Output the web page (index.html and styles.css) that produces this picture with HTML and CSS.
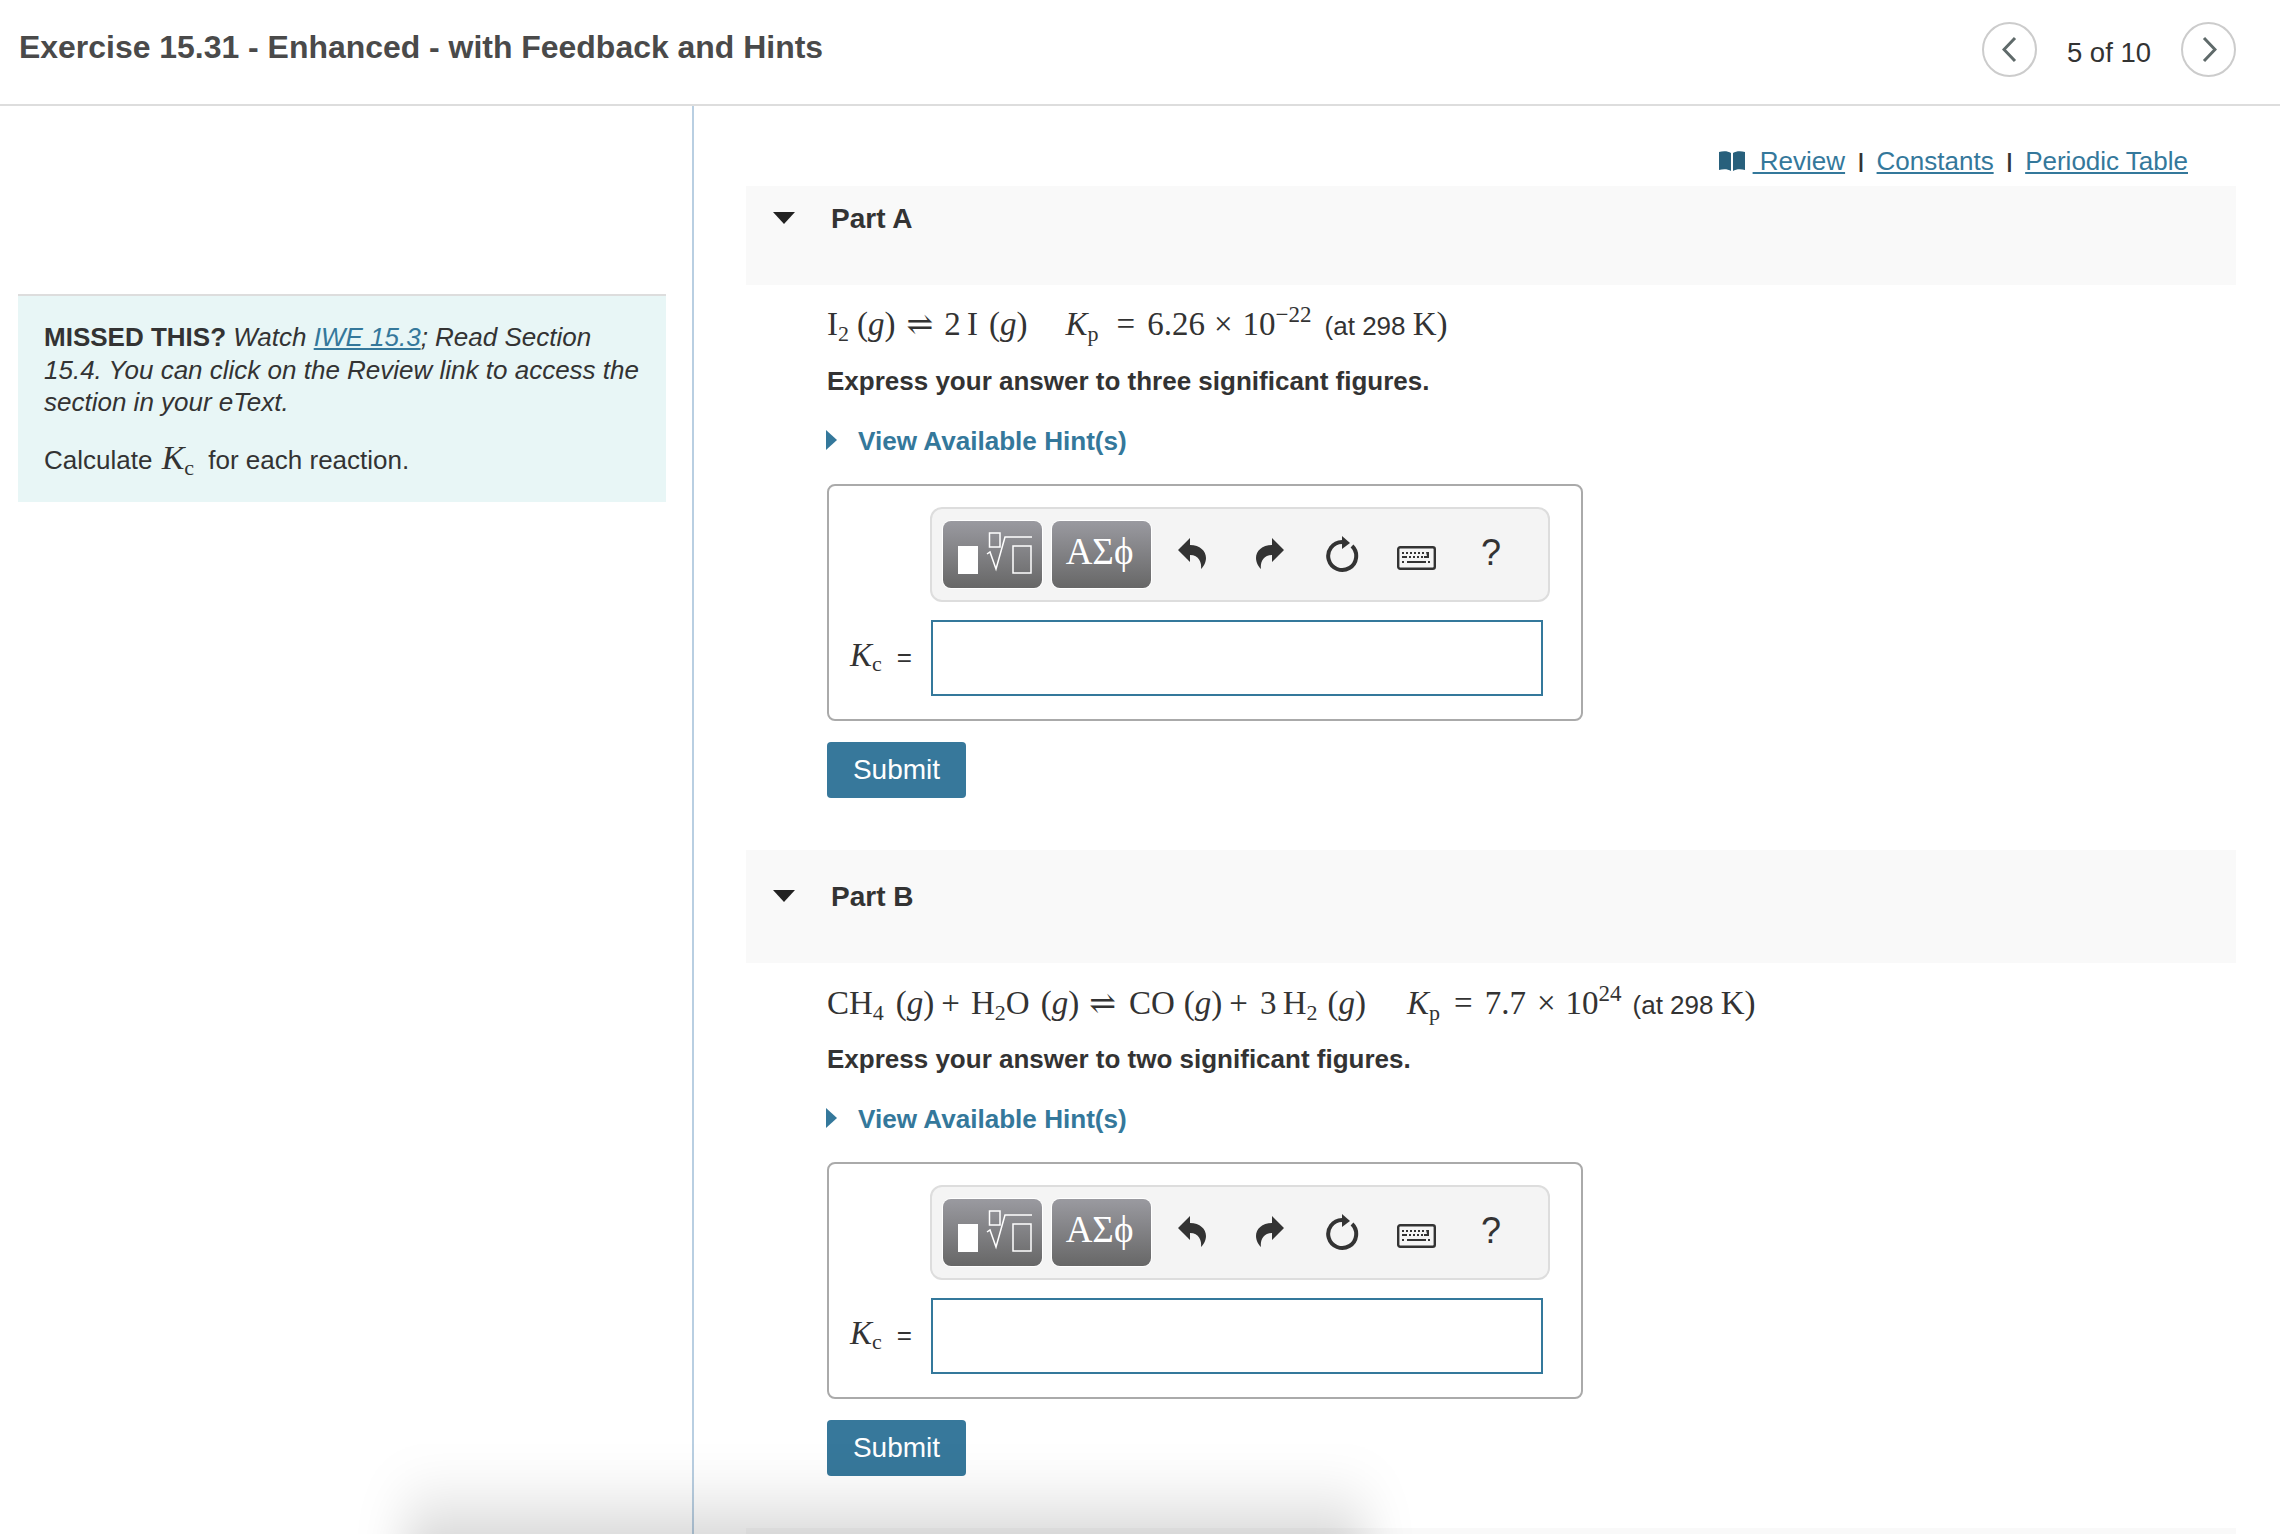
FILE: index.html
```html
<!DOCTYPE html>
<html lang="en">
<head>
<meta charset="utf-8">
<title>Exercise 15.31</title>
<link rel="stylesheet" href="styles.css">
</head>
<body>
<header class="topbar">
  <h1 class="title">Exercise 15.31 - Enhanced - with Feedback and Hints</h1>
  <nav class="pager">
    <button class="circle"><svg width="16" height="27" viewBox="0 0 16 27"><path d="M13 2 2 13.5 13 25" fill="none" stroke="#5f6a6a" stroke-width="3"/></svg></button>
    <span class="count">5 of 10</span>
    <button class="circle"><svg width="16" height="27" viewBox="0 0 16 27"><path d="M3 2l11 11.500L3 25" fill="none" stroke="#5f6a6a" stroke-width="3"/></svg></button>
  </nav>
</header>
<div class="main">
  <aside class="side">
    <div class="note">
      <p class="note-line"><b>MISSED THIS?</b> Watch <a href="#">IWE 15.3</a>; Read Section</p>
      <p class="note-line">15.4. You can click on the Review link to access the</p>
      <p class="note-line">section in your eText.</p>
      <p class="calc">Calculate <i class="k-big">K</i><span class="sub-c">c</span> for each reaction.</p>
    </div>
  </aside>
  <section class="content">
    <div class="links">
      <svg class="book" width="26" height="20" viewBox="0 0 26 20"><path d="M0 1c4-1 9-1 12 1v18c-3-2-8-2-12-1zM26 1c-4-1-9-1-12 1v18c3-2 8-2 12-1z" fill="#28607c"/></svg>
      <a href="#">&nbsp;Review</a><span class="sep">|</span><a href="#">Constants</a><span class="sep">|</span><a href="#">Periodic Table</a>
    </div>

    <div class="part-head"><span class="tri-down"></span><span class="part-name">Part A</span></div>
    <div class="part-body">
      <div class="eq">
        <span>I<sub>2</sub></span><span class="m8">(<i>g</i>)</span><span class="arrow m11">⇌</span><span class="m11 tight">2 I</span><span class="m11">(<i>g</i>)</span><span class="m38"><i>K</i><sub>p</sub></span><span class="m18">=</span><span class="m12">6.26</span><span class="m9">×</span><span class="m10">10<sup>−22</sup></span><span class="at m13">(at 298 </span><span>K)</span>
      </div>
      <p class="express">Express your answer to three significant figures.</p>
      <div class="hint"><span class="tri-right"></span><span>View Available Hint(s)</span></div>
      <div class="answer">
        <div class="toolbar">
          <div class="tool-btn"><svg width="99" height="67" viewBox="0 0 99 67"><rect x="15" y="25" width="20" height="28" fill="#fff"/><rect x="46.500" y="12" width="10.500" height="14" fill="none" stroke="#fff" stroke-width="1.500"/><path d="M44 33l3-2 6 17 9-32h27" fill="none" stroke="#fff" stroke-width="1.500"/><rect x="70" y="25" width="18" height="27" fill="none" stroke="#fff" stroke-width="1.500"/></svg></div>
          <div class="tool-btn greek">ΑΣϕ</div>
          <svg class="undo" width="28" height="32" viewBox="0 0 28 32"><path d="M0 12 12 0v7c10 0 16 6 16 13 0 5-3 9-5 11 1-6-2-14-11-14v7z" fill="#333"/></svg>
          <svg class="redo" width="28" height="32" viewBox="0 0 28 32"><path d="M28 12 16 0v7C6 7 0 13 0 20c0 5 3 9 5 11-1-6 2-14 11-14v7z" fill="#333"/></svg>
          <svg class="reload" width="36" height="38" viewBox="0 0 36 38"><path d="M18 7A14 14 0 1 0 28 11" fill="none" stroke="#333" stroke-width="4"/><path d="M18 1l8 7-8 6z" fill="#333"/></svg>
          <svg class="keys" width="39" height="24" viewBox="0 0 39 24"><rect x="1.200" y="1.200" width="36.600" height="21.600" rx="2" fill="none" stroke="#333" stroke-width="2.400"/><path d="M5 6h2v2H5zM9 6h2v2H9zM13 6h2v2h-2zM17 6h2v2h-2zM21 6h2v2h-2zM25 6h2v2h-2zM29 6h3v6h-5v-2h3zM5 10h5v2H5zM12 10h2v2h-2zM16 10h2v2h-2zM20 10h2v2h-2zM24 10h2v2h-2zM5 15h2v2H5zM10 15h19v2H10zM31 15h2v2h-2z" fill="#333"/></svg>
          <span class="help">?</span>
        </div>
        <div class="input-row">
          <label class="k-label"><i class="k-mid">K</i><span class="sub-small">c</span><span class="equals">=</span></label>
          <div class="field"></div>
        </div>
      </div>
      <button class="submit">Submit</button>
    </div>

    <div class="part-head tall"><span class="tri-down"></span><span class="part-name">Part B</span></div>
    <div class="part-body">
      <div class="eq eq-b">
        <span>CH<sub>4</sub></span><span class="m12">(<i>g</i>)</span><span class="m7">+</span><span class="m11">H<sub>2</sub>O</span><span class="m11">(<i>g</i>)</span><span class="arrow m10">⇌</span><span class="m13">CO</span><span class="m9">(<i>g</i>)</span><span class="m7">+</span><span class="m12 tight">3 H<sub>2</sub></span><span class="m10">(<i>g</i>)</span><span class="m41"><i>K</i><sub>p</sub></span><span class="m14">=</span><span class="m12">7.7</span><span class="m11">×</span><span class="m10">10<sup>24</sup></span><span class="at m11">(at 298 </span><span>K)</span>
      </div>
      <p class="express">Express your answer to two significant figures.</p>
      <div class="hint"><span class="tri-right"></span><span>View Available Hint(s)</span></div>
      <div class="answer">
        <div class="toolbar">
          <div class="tool-btn"><svg width="99" height="67" viewBox="0 0 99 67"><rect x="15" y="25" width="20" height="28" fill="#fff"/><rect x="46.500" y="12" width="10.500" height="14" fill="none" stroke="#fff" stroke-width="1.500"/><path d="M44 33l3-2 6 17 9-32h27" fill="none" stroke="#fff" stroke-width="1.500"/><rect x="70" y="25" width="18" height="27" fill="none" stroke="#fff" stroke-width="1.500"/></svg></div>
          <div class="tool-btn greek">ΑΣϕ</div>
          <svg class="undo" width="28" height="32" viewBox="0 0 28 32"><path d="M0 12 12 0v7c10 0 16 6 16 13 0 5-3 9-5 11 1-6-2-14-11-14v7z" fill="#333"/></svg>
          <svg class="redo" width="28" height="32" viewBox="0 0 28 32"><path d="M28 12 16 0v7C6 7 0 13 0 20c0 5 3 9 5 11-1-6 2-14 11-14v7z" fill="#333"/></svg>
          <svg class="reload" width="36" height="38" viewBox="0 0 36 38"><path d="M18 7A14 14 0 1 0 28 11" fill="none" stroke="#333" stroke-width="4"/><path d="M18 1l8 7-8 6z" fill="#333"/></svg>
          <svg class="keys" width="39" height="24" viewBox="0 0 39 24"><rect x="1.200" y="1.200" width="36.600" height="21.600" rx="2" fill="none" stroke="#333" stroke-width="2.400"/><path d="M5 6h2v2H5zM9 6h2v2H9zM13 6h2v2h-2zM17 6h2v2h-2zM21 6h2v2h-2zM25 6h2v2h-2zM29 6h3v6h-5v-2h3zM5 10h5v2H5zM12 10h2v2h-2zM16 10h2v2h-2zM20 10h2v2h-2zM24 10h2v2h-2zM5 15h2v2H5zM10 15h19v2H10zM31 15h2v2h-2z" fill="#333"/></svg>
          <span class="help">?</span>
        </div>
        <div class="input-row">
          <label class="k-label"><i class="k-mid">K</i><span class="sub-small">c</span><span class="equals">=</span></label>
          <div class="field"></div>
        </div>
      </div>
      <button class="submit">Submit</button>
    </div>
    <div class="part-head last"></div>
  </section>
</div>
<div class="fade"></div>
</body>
</html>
```
FILE: styles.css
```css
* { box-sizing: border-box; }
html, body { margin: 0; height: 1534px; overflow: hidden; background: #fff; }
body { position: relative; font-family: "Liberation Sans", Arial, sans-serif; color: #333; display: flex; flex-direction: column; }
p { margin: 0; }
a { color: #34789b; text-decoration: underline; }

.topbar { height: 106px; flex: none; border-bottom: 2px solid #ddd; display: flex; justify-content: space-between; align-items: center; padding: 0 44px 0 19px; }
.title { margin: 0 0 10px; font-size: 31.95px; line-height: 40px; font-weight: bold; color: #4a4a4a; }
.pager { display: flex; align-items: center; margin-top: -6px; }
.circle { width: 55px; height: 55px; border-radius: 50%; border: 2px solid #ccc; background: #fff; padding: 0; display: flex; align-items: center; justify-content: center; }
.count { width: 144px; text-align: center; font-size: 27.5px; line-height: 32px; padding-top: 8px; color: #333; }

.main { flex: 1; display: flex; min-height: 0; }
.side { width: 694px; flex: none; border-right: 2px solid #b9cfe2; padding: 188px 26px 0 18px; }
.note { background: #e8f6f6; border-top: 2px solid #ddd; height: 208px; padding: 25px 20px 0 26px; font-size: 26px; line-height: 32.5px; color: #333; }
.note-line { font-style: italic; white-space: nowrap; }
.note-line b { font-style: normal; }
.calc { margin-top: 22px; }
.k-big { font-family: "Liberation Serif", serif; font-size: 34px; line-height: 1; margin-left: 2px; }
.sub-c { font-family: "Liberation Serif", serif; font-size: 22px; line-height: 1; position: relative; top: 6px; margin-right: 7px; }

.content { flex: 1; padding: 0 44px 0 52px; min-width: 0; }
.links { height: 80px; display: flex; align-items: flex-end; justify-content: flex-end; padding: 0 48px 9px 0; font-size: 26px; line-height: 32px; }
.book { margin-bottom: 6px; margin-right: 8px; }
.sep { width: 31.5px; text-align: center; color: #333; font-size: 21px; font-weight: bold; }

.part-head { height: 99px; background: #f9f9f9; display: flex; align-items: flex-start; padding: 17px 0 0 27px; }
.part-head.tall { height: 113px; padding-top: 31px; }
.part-head.last { height: 8px; padding: 0; }
.tri-down { width: 0; height: 0; border-left: 11px solid transparent; border-right: 11px solid transparent; border-top: 12px solid #222; margin-top: 9px; }
.part-name { margin-left: 36px; font-size: 28px; line-height: 32px; font-weight: bold; color: #333; }

.part-body { padding: 21px 0 52px 81px; }
.eq { height: 34px; margin-top: 1px; margin-bottom: -1px; display: flex; align-items: baseline; font-family: "Liberation Serif", serif; font-size: 33px; line-height: 34px; color: #333; white-space: pre; }
.eq-b { margin-top: 2px; margin-bottom: -2px; }
.eq sub { font-size: 22px; line-height: 0; vertical-align: -6px; }
.eq sup { font-size: 23px; line-height: 0; vertical-align: 13px; }
.tight { word-spacing: -2px; }
.arrow { font-family: "DejaVu Serif", serif; font-size: 32px; }
.at { font-family: "Liberation Sans", sans-serif; font-size: 26px; }
.m7 { margin-left: 7px; }
.m8 { margin-left: 8px; }
.m9 { margin-left: 9px; }
.m10 { margin-left: 10px; }
.m11 { margin-left: 11px; }
.m12 { margin-left: 12px; }
.m13 { margin-left: 13px; }
.m14 { margin-left: 14px; }
.m18 { margin-left: 18px; }
.m38 { margin-left: 38px; }
.m41 { margin-left: 41px; }

.express { margin-top: 25px; font-size: 26px; line-height: 32px; font-weight: bold; color: #333; }
.hint { margin-top: 28px; display: flex; align-items: center; font-size: 26.1px; line-height: 32px; font-weight: bold; color: #34789b; }
.tri-right { width: 0; height: 0; border-top: 10.5px solid transparent; border-bottom: 10.5px solid transparent; border-left: 11px solid #34789b; margin: -2px 21px 0 -1px; }

.answer { margin-top: 27px; width: 756px; border: 2px solid #aaa; border-radius: 8px; padding: 21px 0 23px; }
.toolbar { margin-left: 101px; width: 620px; height: 95px; background: #f4f4f4; border: 2px solid #ddd; border-radius: 12px; display: flex; align-items: center; padding-left: 11px; }
.tool-btn { width: 99px; height: 67px; border-radius: 8px; background: linear-gradient(#9a9aa0, #676767); box-shadow: 0 0 0 1px #fff; flex: none; margin-right: 10px; display: flex; align-items: center; justify-content: center; }
.tool-btn svg { display: block; }
.greek { color: #fff; font-family: "Liberation Serif", serif; font-size: 37px; line-height: 40px; padding: 0 4px 5px 0; margin-right: 0; }
.undo { margin-left: 27px; margin-top: -1px; }
.redo { margin-left: 50px; margin-top: -1px; }
.reload { margin-left: 40px; margin-top: -2px; }
.keys { margin-left: 37px; margin-top: 7px; }
.help { margin-left: 45px; margin-top: -3px; font-size: 36px; line-height: 36px; color: #333; }

.input-row { margin-top: 18px; display: flex; align-items: center; }
.k-label { width: 102px; padding-left: 21px; padding-bottom: 4px; display: flex; align-items: baseline; font-size: 24px; }
.k-mid { font-family: "Liberation Serif", serif; font-size: 33px; line-height: 1; }
.sub-small { font-family: "Liberation Serif", serif; font-size: 22px; line-height: 1; position: relative; top: 5px; }
.equals { margin-left: 15px; font-size: 26px; }
.field { width: 612px; height: 76px; border: 2px solid #34789b; background: #fff; }

.submit { display: block; margin-top: 21px; width: 139px; height: 56px; padding: 0; border: 0; border-radius: 4px; background: #37789b; color: #fff; font-family: "Liberation Sans", sans-serif; font-size: 28px; }

.fade { position: absolute; left: 0; right: 0; bottom: 0; height: 90px; overflow: hidden; pointer-events: none; }
.fade::before { content: ""; position: absolute; left: 405px; width: 960px; top: 26px; height: 130px; background: linear-gradient(rgba(0,0,0,0), rgba(0,0,0,.26)); filter: blur(24px); }
```
